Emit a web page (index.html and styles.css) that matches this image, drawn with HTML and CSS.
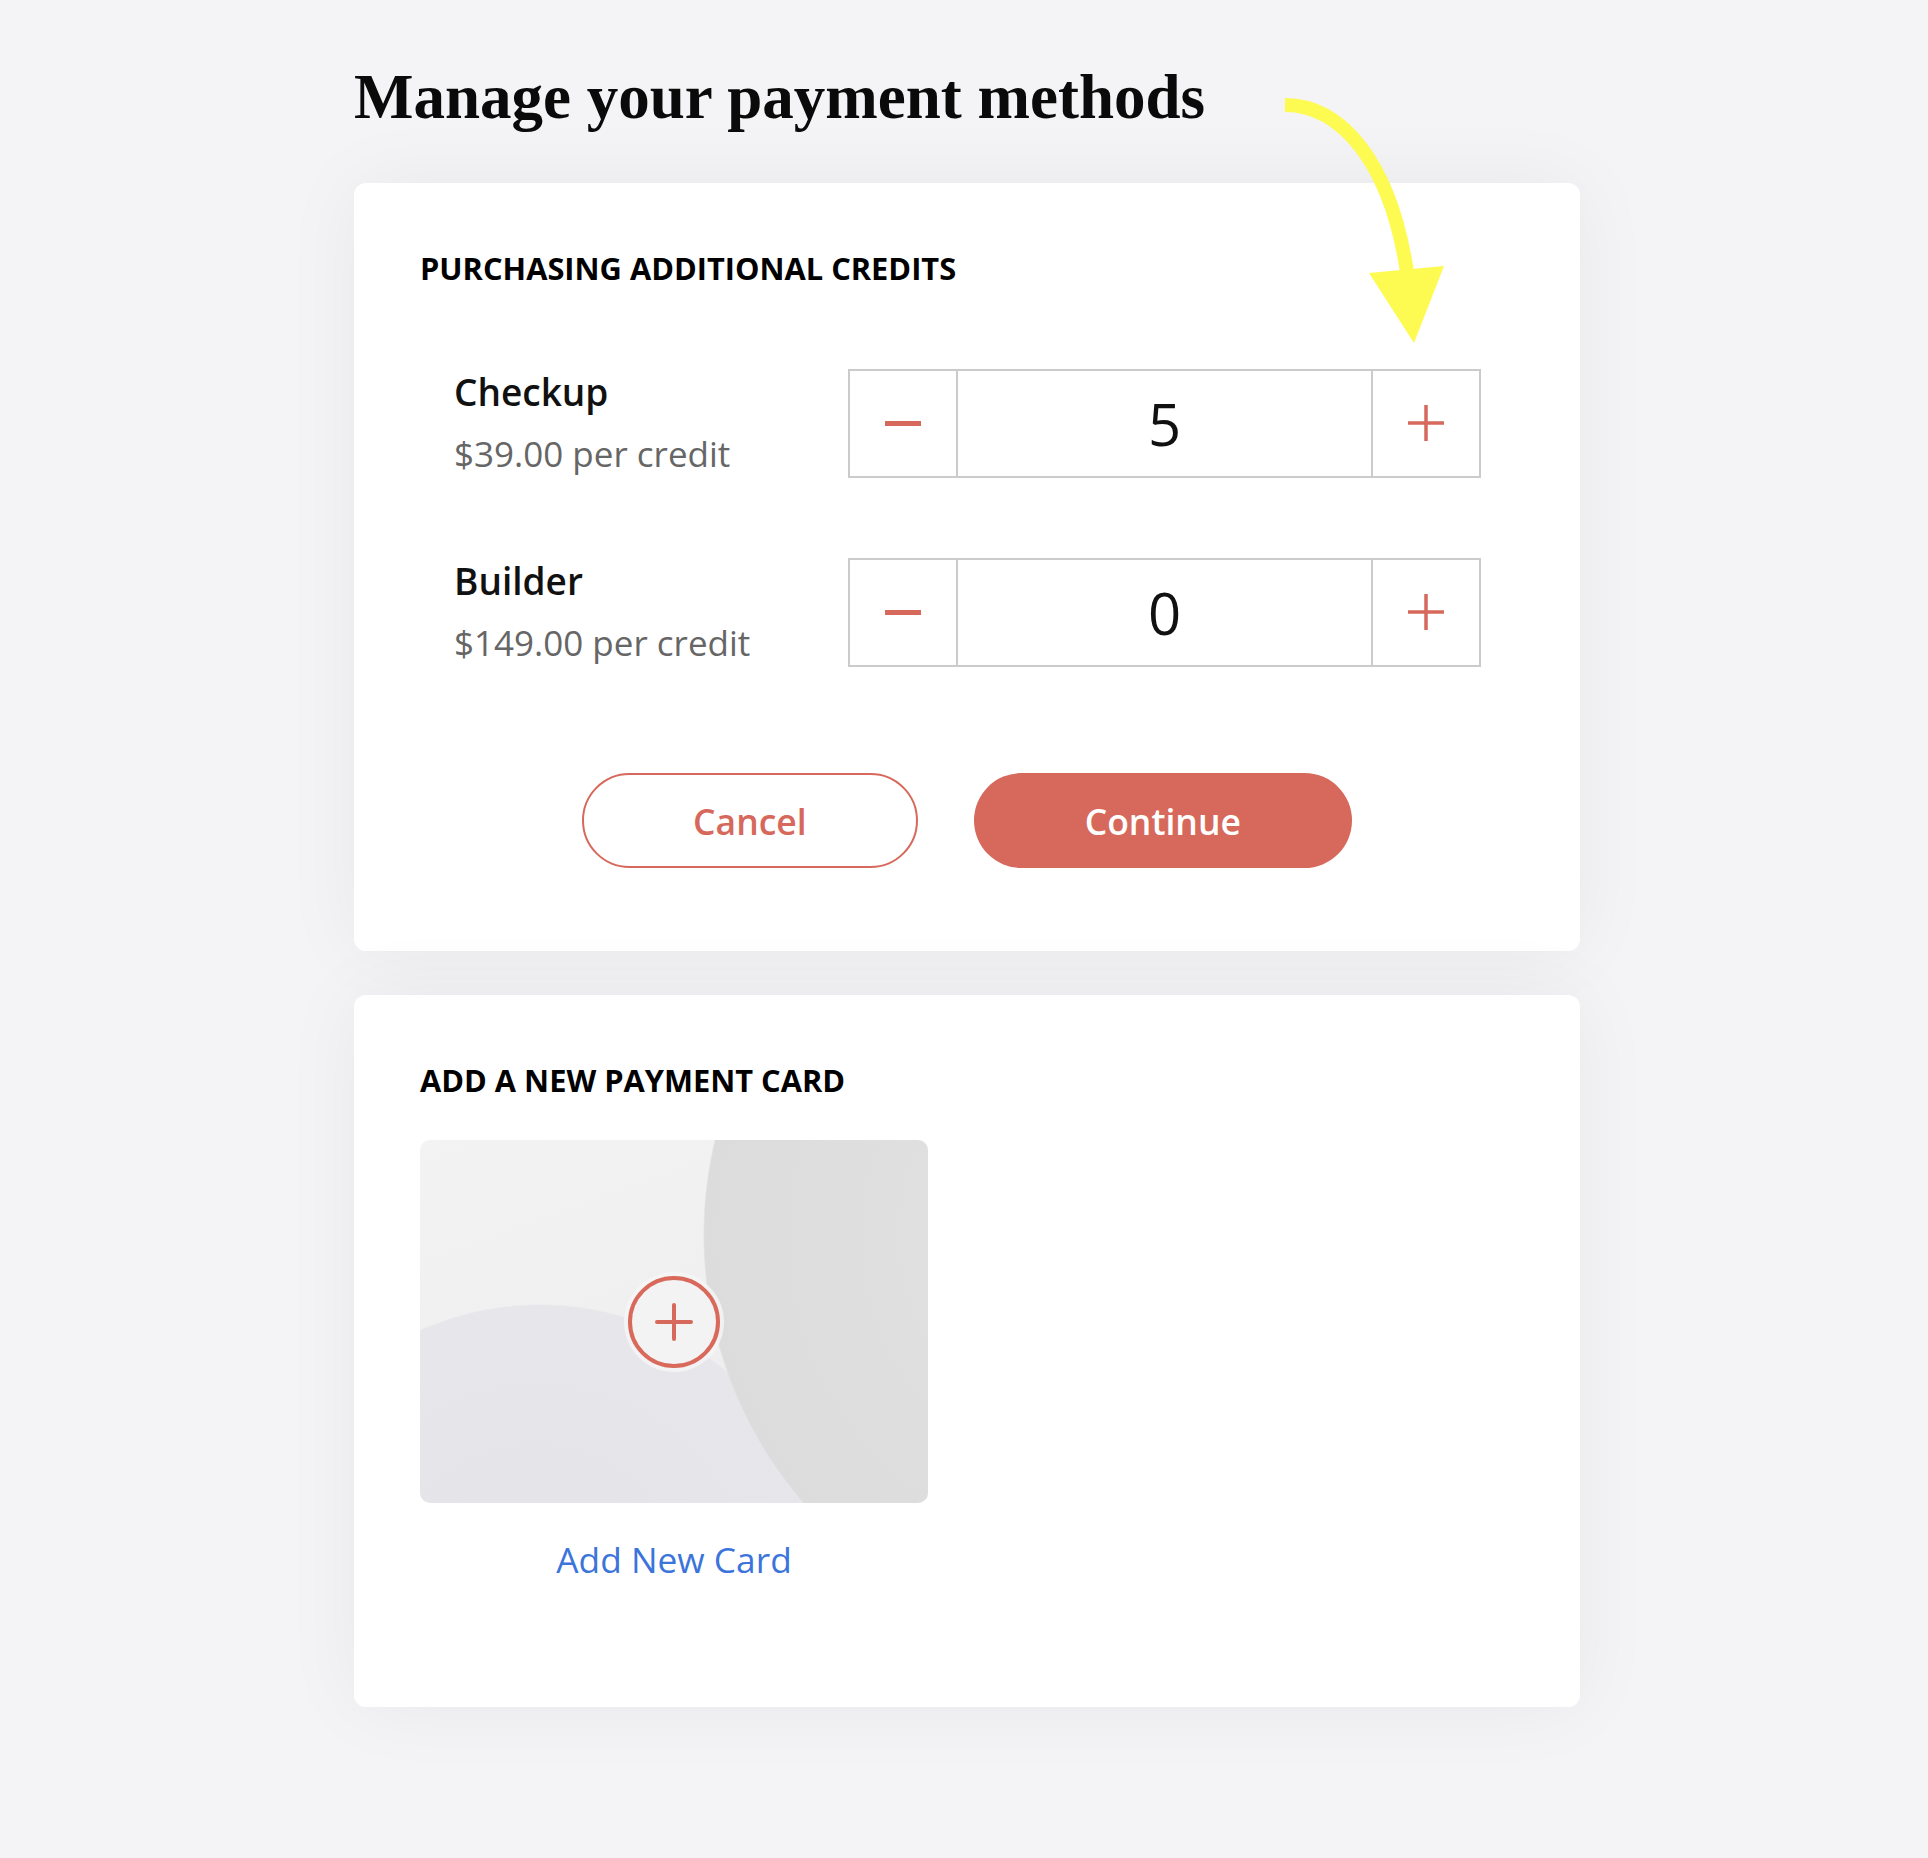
FILE: index.html
```html
<!DOCTYPE html>
<html>
<head>
    <title>Payment methods</title>
    <link rel="stylesheet" href="styles.css">
</head>
<body>
  <main class="page">
    <h1 class="page-title">Manage your payment methods</h1>

    <section class="panel">
      <h2 class="panel-title">PURCHASING ADDITIONAL CREDITS</h2>
      <div class="credit-list">
        <div class="credit-row">
          <div class="credit-info">
            <div class="credit-name">Checkup</div>
            <div class="credit-price">$39.00 per credit</div>
          </div>
          <div class="stepper">
            <button type="button" class="step-btn step-minus"><span class="minus-icon"></span></button>
            <div class="step-value">5</div>
            <button type="button" class="step-btn step-plus">
              <svg width="36" height="36" viewBox="0 0 36 36"><path d="M18 0v36M0 18h36" stroke="#d6695b" stroke-width="3.5"/></svg>
            </button>
          </div>
        </div>
        <div class="credit-row">
          <div class="credit-info">
            <div class="credit-name">Builder</div>
            <div class="credit-price">$149.00 per credit</div>
          </div>
          <div class="stepper">
            <button type="button" class="step-btn step-minus"><span class="minus-icon"></span></button>
            <div class="step-value">0</div>
            <button type="button" class="step-btn step-plus">
              <svg width="36" height="36" viewBox="0 0 36 36"><path d="M18 0v36M0 18h36" stroke="#d6695b" stroke-width="3.5"/></svg>
            </button>
          </div>
        </div>
      </div>
      <div class="actions">
        <button type="button" class="btn btn-outline">Cancel</button>
        <button type="button" class="btn btn-primary">Continue</button>
      </div>
    </section>

    <section class="panel panel-cards">
      <h2 class="panel-title">ADD A NEW PAYMENT CARD</h2>
      <div class="new-card">
        <div class="card-face">
          <span class="add-circle">
            <svg width="40" height="40" viewBox="0 0 40 40"><path d="M20 3v34M3 20h34" stroke="#d6695b" stroke-width="4" stroke-linecap="round"/></svg>
          </span>
        </div>
        <a href="#" class="add-link">Add New Card</a>
      </div>
    </section>
  </main>

  <!-- annotation arrow -->
  <svg class="arrow" width="1928" height="400" viewBox="0 0 1928 400">
    <path d="M1285 105 C1340 105 1390 160 1407 272" fill="none" stroke="#fdfb52" stroke-width="14"/>
    <polygon points="1369,273 1444,266 1414,343" fill="#fdfb52"/>
  </svg>
</body>
</html>
```

FILE: styles.css
```css
* {
    box-sizing: border-box;
}

body {
    margin: 0;
    font-family: "Open Sans", Arial, sans-serif;
    background-color: #f4f4f6;
    color: #111;
}

.page {
    width: 1226px;
    margin-left: 354px;
    padding: 61px 0 150px;
}

.page-title {
    margin: 0 0 50px;
    font-family: "Liberation Serif", "Times New Roman", serif;
    font-size: 63px;
    line-height: 72px;
    font-weight: 700;
    color: #0a0a0a;
}

.panel {
    background-color: #fff;
    border-radius: 12px;
    padding: 67px 66px 83px;
    margin-bottom: 44px;
    box-shadow: 0 0 80px rgba(20, 20, 40, 0.05);
}

.panel-title {
    margin: 0 0 76px;
    font-size: 30.8px;
    line-height: 36px;
    font-weight: 700;
    color: #000;
}

.credit-list {
    display: flex;
    flex-direction: column;
    gap: 67px;
    padding: 0 33px 0 34px;
}

.credit-row {
    display: flex;
    justify-content: space-between;
    align-items: center;
}

.credit-info {
    line-height: 60px;
}

.credit-name {
    font-size: 37px;
    font-weight: 600;
    color: #111;
}

.credit-price {
    margin-top: 2px;
    font-size: 35px;
    color: #666;
}

.stepper {
    display: flex;
    width: 633px;
    height: 109px;
    border: 2px solid #cbcbcb;
    background-color: #fff;
}

.step-btn {
    width: 108px;
    padding: 0;
    border: none;
    background: #fff;
    display: flex;
    align-items: center;
    justify-content: center;
    cursor: pointer;
}

.step-minus {
    border-right: 2px solid #cbcbcb;
}

.step-plus {
    border-left: 2px solid #cbcbcb;
}

.minus-icon {
    display: block;
    width: 36px;
    height: 5px;
    background-color: #d6695b;
}

.step-value {
    flex: 1;
    display: flex;
    align-items: center;
    justify-content: center;
    font-size: 58px;
    color: #111;
}

.actions {
    display: flex;
    justify-content: center;
    gap: 56px;
    margin-top: 100px;
}

.btn {
    height: 95px;
    padding: 0 111px;
    border-radius: 48px;
    font-family: "Open Sans", Arial, sans-serif;
    font-size: 35.5px;
    font-weight: 600;
    cursor: pointer;
}

.btn-outline {
    padding: 0 109px;
    border: 2px solid #d6695b;
    background-color: #fff;
    color: #d6695b;
}

.btn-primary {
    border: none;
    background-color: #d6695b;
    color: #fff;
}

.panel-cards {
    padding-bottom: 124px;
}

.panel-cards .panel-title {
    margin-bottom: 42px;
}

.new-card {
    width: 508px;
    display: flex;
    flex-direction: column;
    align-items: center;
}

.card-face {
    width: 508px;
    height: 363px;
    border-radius: 10px;
    display: flex;
    align-items: center;
    justify-content: center;
    background:
        radial-gradient(circle 410px at 693px 95px, #e3e3e3 0, #dcdcdc 99.6%, rgba(220, 220, 220, 0) 100%),
        radial-gradient(circle 295px at 120px 459px, #e4e4e8 0, #e7e7eb 99.5%, rgba(231, 231, 235, 0) 100%),
        linear-gradient(160deg, #f3f3f3, #ececee);
}

.add-circle {
    width: 92px;
    height: 92px;
    border-radius: 50%;
    border: 4px solid #d9695b;
    background-color: #f3f3f4;
    box-shadow: 0 0 0 4px rgba(246, 246, 247, 0.8);
    display: flex;
    align-items: center;
    justify-content: center;
}

.add-link {
    margin-top: 32px;
    font-size: 35.3px;
    line-height: 48px;
    color: #3b74db;
    text-decoration: none;
}

.arrow {
    position: absolute;
    top: 0;
    left: 0;
    pointer-events: none;
}
```
